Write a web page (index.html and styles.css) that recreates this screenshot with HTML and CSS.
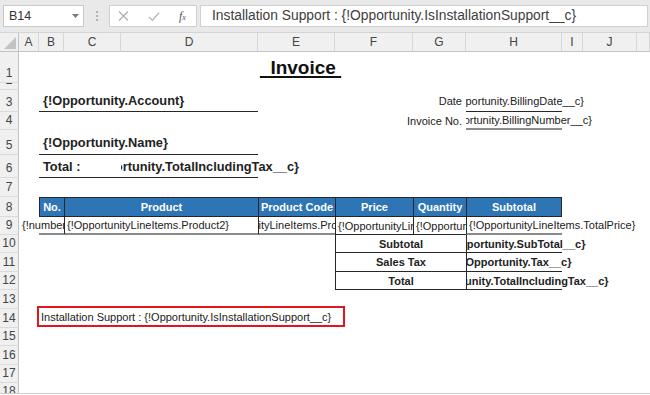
FILE: index.html
```html
<!DOCTYPE html>
<html lang="en">
<head>
  <meta charset="UTF-8" />
  <meta name="viewport" content="width=device-width, initial-scale=1.0"/>
  <title>Invoice - Sheet Template</title>
  <link rel="stylesheet" href="styles.css">
</head>
<body>
  <!-- Name box + formula bar -->
  <div class="formula-bar">
    <div class="name-box">
      <span>B14</span>
      <svg class="caret" width="7" height="4" viewBox="0 0 7 4"><path d="M0 0h7L3.5 4z" fill="#7a7a7a"/></svg>
    </div>
    <div class="grip"></div>
    <div class="fx-box">
      <svg width="11" height="10" viewBox="0 0 11 10"><path d="M1 0.5l9 9M10 0.5l-9 9" stroke="#ababab" stroke-width="1.1" fill="none"/></svg>
      <svg width="12" height="9" viewBox="0 0 12 9"><path d="M0.8 4.8l3.6 3.4L11.2 0.6" stroke="#ababab" stroke-width="1.1" fill="none"/></svg>
      <span class="fx">f<span class="sub">x</span></span>
    </div>
    <div class="formula-input">Installation Support : {!Opportunity.IsInstallationSupport__c}</div>
  </div>

  <!-- Worksheet -->
  <div class="sheet">
    <div class="corner">
      <svg width="12" height="12" viewBox="0 0 12 12"><path d="M12 0v12H0z" fill="#c2c2c2"/></svg>
    </div>
    <div class="ch">A</div>
    <div class="ch">B</div>
    <div class="ch">C</div>
    <div class="ch">D</div>
    <div class="ch">E</div>
    <div class="ch">F</div>
    <div class="ch">G</div>
    <div class="ch">H</div>
    <div class="ch">I</div>
    <div class="ch">J</div>
    <div class="ch"></div>

    <div class="rh">1</div>
    <div class="rh">2</div>
    <div class="rh">3</div>
    <div class="rh">4</div>
    <div class="rh">5</div>
    <div class="rh">6</div>
    <div class="rh">7</div>
    <div class="rh">8</div>
    <div class="rh">9</div>
    <div class="rh">10</div>
    <div class="rh">11</div>
    <div class="rh">12</div>
    <div class="rh">13</div>
    <div class="rh">14</div>
    <div class="rh">15</div>
    <div class="rh">16</div>
    <div class="rh">17</div>
    <div class="rh">18</div>

    <!-- row 1 -->
    <div class="title y1 x-bh"><span>&nbsp;&nbsp;Invoice&nbsp;</span></div>

    <!-- row 3 -->
    <div class="cell y3 x-bd bold big line pad4">{!Opportunity.Account}</div>
    <div class="cell y3 x-g right">Date</div>
    <div class="cell y3 x-h clip-left line">{!Opportunity.BillingDate__c}</div>

    <!-- row 4 -->
    <div class="cell y4 x-g right">Invoice No.</div>
    <div class="cell y4 x-h clip-left line-gray">{!Opportunity.BillingNumber__c}</div>

    <!-- row 5 -->
    <div class="cell y5 x-bd bold big line pad4">{!Opportunity.Name}</div>

    <!-- row 6 -->
    <div class="cell y6 x-bc bold big line pad4">Total :</div>
    <div class="cell y6 x-d bold big line clip-left">{!Opportunity.TotalIncludingTax__c}</div>

    <!-- row 8: table head -->
    <div class="th y8 x-b">No.</div>
    <div class="th y8 x-cd">Product</div>
    <div class="th y8 x-e">Product Code</div>
    <div class="th y8 x-f">Price</div>
    <div class="th y8 x-g">Quantity</div>
    <div class="th y8 x-h last">Subtotal</div>

    <!-- row 9: line item -->
    <div class="cell y9 x-b td clip-right"><span class="spill">{!number}</span></div>
    <div class="cell y9 x-cd td sep">{!OpportunityLineItems.Product2}</div>
    <div class="cell y9 x-e td sep clip center">{!OpportunityLineItems.ProductCode}</div>
    <div class="cell y9 x-f td-dark sep clip">{!OpportunityLineItems.UnitPrice}</div>
    <div class="cell y9 x-g td-dark sep clip">{!OpportunityLineItems.Quantity}</div>
    <div class="cell y9 x-h td sep">{!OpportunityLineItems.TotalPrice}</div>

    <!-- rows 10-12: totals -->
    <div class="cell y10 x-fg sum-label">Subtotal</div>
    <div class="cell y10 x-h sum-value clip-left">{!Opportunity.SubTotal__c}</div>
    <div class="cell y11 x-fg sum-label">Sales Tax</div>
    <div class="cell y11 x-h sum-value clip-left">{!Opportunity.Tax__c}</div>
    <div class="cell y12 x-fg sum-label">Total</div>
    <div class="cell y12 x-h sum-value clip-left">{!Opportunity.TotalIncludingTax__c}</div>

    <!-- row 14 -->
    <div class="cell y14 x-bf flat">
      <div class="callout">Installation Support : {!Opportunity.IsInstallationSupport__c}</div>
    </div>
  </div>
</body>
</html>
```

FILE: styles.css
```css
* {
  box-sizing: border-box;
}

body {
  margin: 0;
  width: 650px;
  height: 395px;
  overflow: hidden;
  background: #fff;
  color: #222;
  font-family: "Liberation Sans", Arial, sans-serif;
}

/* top bar */
.formula-bar {
  display: flex;
  align-items: center;
  height: 33px;
  padding: 0 2px 0 3px;
  background: #e9e9e9;
  border-bottom: 1px solid #d4d4d4;
}

.name-box {
  display: flex;
  align-items: center;
  justify-content: space-between;
  width: 81px;
  height: 22px;
  padding: 0 4px 0 5px;
  background: #fff;
  border: 1px solid #c9c9c9;
  font-size: 12.5px;
  color: #333;
}

.grip {
  width: 2px;
  height: 10px;
  margin-left: 12px;
  border-left: 2px dotted #b3b3b3;
}

.fx-box {
  display: flex;
  align-items: center;
  gap: 19px;
  width: 88px;
  height: 22px;
  margin-left: 11px;
  padding-left: 8px;
  background: #fff;
  border: 1px solid #d0d0d0;
}

.fx {
  font-family: "Liberation Serif", serif;
  font-style: italic;
  font-size: 12px;
  color: #555;
}

.fx .sub {
  font-size: 8px;
}

.formula-input {
  flex: 1;
  height: 22px;
  margin-left: 3px;
  padding-left: 11px;
  line-height: 20px;
  background: #fff;
  border: 1px solid #d0d0d0;
  font-size: 13.8px;
  color: #404040;
  white-space: nowrap;
  overflow: hidden;
}

/* grid */
.sheet {
  display: grid;
  grid-template-columns: 19px 20px 25px 57px 137px 77px 78px 53px 96px 21px 54px 13px;
  grid-template-rows: 19px 31px 7px 22px 18px 25px 23px 19px 20px 18px 18px 19px 18px 19px 19px 18px 19px 18px 18px;
  height: 361px;
  overflow: hidden;
  font-size: 11px;
  border-bottom: 1px solid #cfcfcf;
}

.corner {
  grid-row: 1;
  grid-column: 1;
  display: flex;
  align-items: flex-end;
  justify-content: flex-end;
  padding: 0 2px 2px 0;
  background: #f0f0f0;
  border-right: 1px solid #c3c3c3;
  border-bottom: 1px solid #c3c3c3;
}

.ch {
  grid-row: 1;
  display: flex;
  align-items: center;
  justify-content: center;
  background: #f0f0f0;
  border-right: 1px solid #d6d6d6;
  border-bottom: 1px solid #c3c3c3;
  font-size: 12px;
  color: #444;
}

.rh {
  grid-column: 1;
  display: flex;
  align-items: flex-end;
  justify-content: center;
  overflow: hidden;
  line-height: 18px;
  background: #f0f0f0;
  border-right: 1px solid #c3c3c3;
  border-bottom: 1px solid #dadada;
  font-size: 12px;
  color: #444;
}

/* placement */
.y1 { grid-row: 2; }
.y3 { grid-row: 4; }
.y4 { grid-row: 5; }
.y5 { grid-row: 6; }
.y6 { grid-row: 7; }
.y8 { grid-row: 9; }
.y9 { grid-row: 10; }
.y10 { grid-row: 11; }
.y11 { grid-row: 12; }
.y12 { grid-row: 13; }
.y14 { grid-row: 15; }

.x-b { grid-column: 3; }
.x-d { grid-column: 5; }
.x-e { grid-column: 6; }
.x-f { grid-column: 7; }
.x-g { grid-column: 8; }
.x-h { grid-column: 9; }
.x-bc { grid-column: 3 / 5; }
.x-bd { grid-column: 3 / 6; }
.x-cd { grid-column: 4 / 6; }
.x-fg { grid-column: 7 / 9; }
.x-bf { grid-column: 3 / 8; }
.x-bh { grid-column: 3 / 10; }

/* cells */
.cell {
  display: flex;
  align-items: center;
  min-width: 0;
  padding: 0 2px;
  white-space: nowrap;
}

.bold { font-weight: bold; }
.big { font-size: 12.8px; }
.pad4 { padding-left: 4px; }
.right { justify-content: flex-end; padding-right: 4px; }
.center { justify-content: center; }
.clip { overflow: hidden; }
.flat { padding: 0; }

.clip-left {
  justify-content: center;
  padding: 0;
  clip-path: inset(0 -400px 0 0);
}

.clip-right {
  clip-path: inset(0 0 0 -40px);
}

.spill {
  margin-left: -19px;
}

.line { border-bottom: 1px solid #262626; }
.line-gray { border-bottom: 2px solid #8c8c8c; }

.title {
  display: flex;
  align-items: center;
  justify-content: center;
  font-size: 19px;
  font-weight: bold;
  color: #111;
}

.title span {
  text-decoration: underline;
  text-decoration-thickness: 2px;
  text-underline-offset: 2px;
}

/* line item table */
.th {
  display: flex;
  align-items: center;
  justify-content: center;
  background: #2e75b6;
  color: #fff;
  font-weight: bold;
  border-top: 1px solid #262626;
  border-bottom: 1px solid #262626;
  border-left: 1px solid #262626;
  white-space: nowrap;
  overflow: hidden;
}

.th.last {
  border-right: 1px solid #262626;
}

.td { border-bottom: 2px solid #8a8a8a; }
.td-dark { border-bottom: 1px solid #262626; }
.sep { border-left: 1px solid #262626; }

.sum-label {
  justify-content: center;
  font-weight: bold;
  border-left: 1px solid #262626;
  border-bottom: 1px solid #262626;
}

.sum-value {
  font-weight: bold;
  border-left: 1px solid #262626;
  border-bottom: 1px solid #262626;
}

/* annotation box */
.callout {
  display: flex;
  align-items: center;
  width: 308px;
  height: 21px;
  margin-left: -2px;
  margin-top: -4px;
  padding-left: 2px;
  border: 2px solid #e3151c;
  color: #222;
}
```
